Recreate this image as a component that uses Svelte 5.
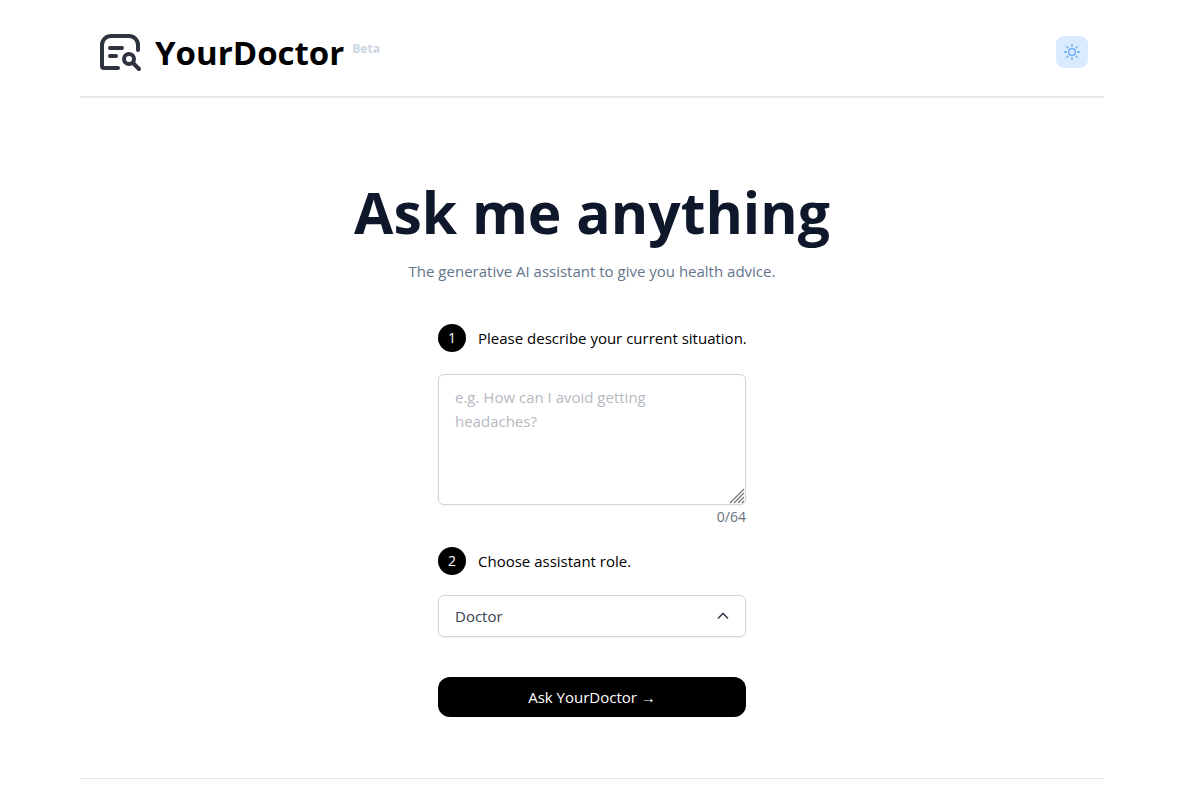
<script>
  const limit = 64;
  const roles = ['Doctor', 'Nutritionist', 'Therapist'];
  let situation = $state('');
  let role = $state('Doctor');
</script>

<div class="page">
  <header>
    <a class="brand" href="#top">
      <svg class="logo" viewBox="0 0 44 40" fill="none" stroke="currentColor" stroke-width="4" stroke-linecap="round" stroke-linejoin="round" aria-hidden="true">
        <path d="M39 17V12a9 9 0 0 0-9-9H12a9 9 0 0 0-9 9v21a2 2 0 0 0 2 2h14" />
        <path d="M11 15h12M11 23h6" />
        <circle cx="30" cy="26" r="5" />
        <path d="M34 30l6 6" />
      </svg>
      <span class="name">YourDoctor</span>
      <span class="beta">Beta</span>
    </a>
    <button class="theme" type="button" aria-label="Toggle theme">
      <svg viewBox="0 0 16 16" fill="none" stroke="currentColor" stroke-width="1.3" aria-hidden="true">
        <circle cx="8" cy="8" r="3.3" />
        <path d="M8 0v3M8 13v3M0 8h3M13 8h3M2.4 2.4l2 2M11.6 11.6l2 2M2.4 13.6l2-2M11.6 4.4l2-2" />
      </svg>
    </button>
  </header>

  <main>
    <h1>Ask me anything</h1>
    <p class="tagline">The generative AI assistant to give you health advice.</p>

    <form onsubmit={(event) => event.preventDefault()}>
      <label class="step" for="situation">
        <span class="number">1</span>
        <span>Please describe your current situation.</span>
      </label>
      <div class="field area">
        <textarea id="situation" maxlength={limit} placeholder="e.g. How can I avoid getting headaches?" bind:value={situation}></textarea>
        <svg class="grip" viewBox="0 0 16 16" stroke="currentColor" stroke-width="1.2" aria-hidden="true">
          <path d="M1 15L15 1M5 15L15 5M9 15l6-6M13 15l2-2" />
        </svg>
      </div>
      <div class="count">{situation.length}/{limit}</div>

      <label class="step" for="role">
        <span class="number">2</span>
        <span>Choose assistant role.</span>
      </label>
      <div class="field">
        <select id="role" bind:value={role}>
          {#each roles as item}
            <option>{item}</option>
          {/each}
        </select>
        <svg class="chevron" viewBox="0 0 20 20" fill="none" stroke="currentColor" stroke-width="1.6" aria-hidden="true">
          <path d="M5 12.5L10 7.5l5 5" />
        </svg>
      </div>

      <button class="submit" type="submit">Ask YourDoctor →</button>
    </form>
  </main>

  <footer></footer>
</div>

<style>
  :global(body) {
    background: #fff;
    padding-right: 16px;
  }

  .page,
  .page * {
    box-sizing: border-box;
  }

  .page {
    max-width: 1024px;
    margin: 0 auto;
    color: #000;
    font: 15px/24px "Segoe UI", "Open Sans", "Noto Sans", sans-serif;
  }

  header {
    display: flex;
    align-items: center;
    justify-content: space-between;
    padding: 32px 16px 22px 19px;
    border-bottom: 2px solid #e5e7eb;
  }

  .brand {
    display: flex;
    align-items: center;
    color: #000;
    text-decoration: none;
  }

  .logo {
    width: 44px;
    height: 40px;
    margin-right: 12px;
    color: #2f333f;
  }

  .name {
    font-size: 33px;
    line-height: 42px;
    font-weight: 700;
  }

  .beta {
    align-self: flex-start;
    margin: 9px 0 0 8px;
    color: #cbd5e1;
    font-size: 12px;
    line-height: 16px;
    font-weight: 700;
  }

  .theme {
    display: grid;
    place-items: center;
    align-self: flex-start;
    width: 32px;
    height: 32px;
    margin-top: 4px;
    padding: 0;
    border: 0;
    border-radius: 8px;
    background: #dbeafe;
    color: #60a5fa;
    cursor: pointer;
  }

  .theme svg {
    width: 16px;
    height: 16px;
  }

  main {
    display: flex;
    flex-direction: column;
    align-items: center;
    padding: 84px 16px 61px;
  }

  h1 {
    margin: 0;
    color: #0f172a;
    font-size: 57px;
    line-height: 60px;
    font-weight: 700;
    text-align: center;
  }

  .tagline {
    margin: 17px 0 41px;
    color: #64748b;
    text-align: center;
  }

  form {
    display: flex;
    flex-direction: column;
    width: 100%;
    max-width: 308px;
  }

  .step {
    display: flex;
    align-items: center;
    gap: 12px;
    margin-bottom: 20px;
    white-space: nowrap;
  }

  .number {
    display: grid;
    flex: none;
    place-items: center;
    width: 28px;
    height: 28px;
    border-radius: 50%;
    background: #000;
    color: #fff;
    font-size: 14px;
  }

  .field {
    position: relative;
  }

  .area {
    margin-top: 2px;
  }

  textarea,
  select {
    display: block;
    width: 100%;
    margin: 0;
    border: 1px solid #d1d5db;
    border-radius: 6px;
    background: #fff;
    box-shadow: 0 1px 2px rgba(0, 0, 0, 0.05);
    font: inherit;
  }

  textarea {
    height: 131px;
    padding: 10px 16px;
    resize: vertical;
  }

  textarea::placeholder {
    color: #b6b9c1;
    opacity: 1;
  }

  textarea::-webkit-resizer {
    background: transparent;
  }

  .grip {
    position: absolute;
    right: 1px;
    bottom: 1px;
    width: 16px;
    height: 16px;
    color: #777;
    pointer-events: none;
  }

  .count {
    margin-bottom: 18px;
    color: #6b7280;
    font-size: 14px;
    text-align: right;
  }

  select {
    height: 42px;
    padding: 0 40px 0 16px;
    appearance: none;
    color: #374151;
  }

  .chevron {
    position: absolute;
    top: 11px;
    right: 13px;
    width: 20px;
    height: 20px;
    color: #374151;
    pointer-events: none;
  }

  .submit {
    height: 40px;
    margin-top: 40px;
    padding: 0 16px;
    border: 0;
    border-radius: 12px;
    background: #000;
    color: #fff;
    font: inherit;
    cursor: pointer;
  }

  footer {
    height: 20px;
    border-top: 1px solid #e5e7eb;
  }
</style>
